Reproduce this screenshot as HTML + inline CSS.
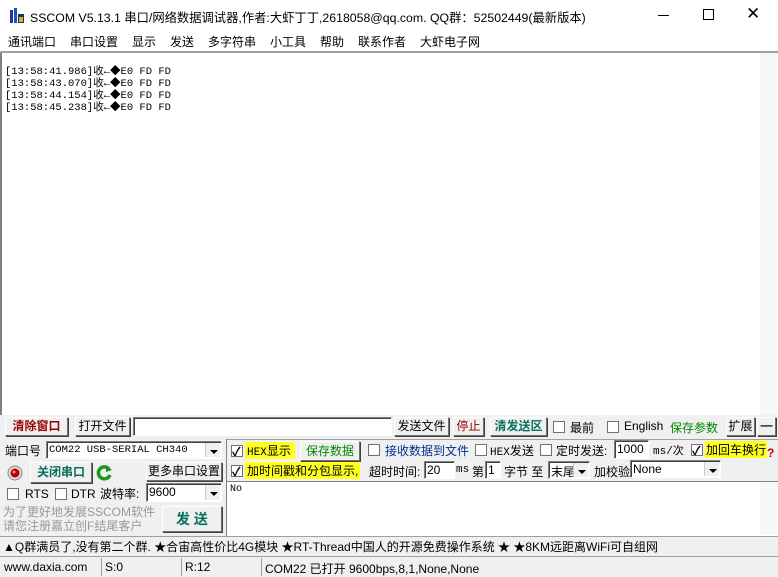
<!DOCTYPE html>
<html><head><meta charset="utf-8"><style>
*{box-sizing:border-box;margin:0;padding:0}
body{width:778px;height:577px;background:#f0f0f0;font-family:"Liberation Sans","Noto Sans CJK SC",sans-serif;font-size:12px;color:#000;position:relative;overflow:hidden}
.a{position:absolute;white-space:nowrap}
.btn{position:absolute;background:#f0f0f0;border:1px solid;border-color:#fff #707070 #707070 #fff;box-shadow:1px 1px 0 #404040;text-align:center;white-space:nowrap}
.inp{position:absolute;background:#fff;border:1px solid;border-color:#808080 #fff #fff #808080;box-shadow:inset 1px 1px 0 #404040;white-space:nowrap;overflow:hidden}
.cb{position:absolute;width:12px;height:12px;background:#fff;border:1px solid #707070}
.cb.on::after{content:"✓";position:absolute;left:0;top:-3px;font-size:12px;font-weight:bold}
.dd{position:absolute;right:1px;top:1px;bottom:1px;width:15px;background:#f0f0f0;border-left:1px solid #ccc}
.dd::after{content:"";position:absolute;left:4px;top:7px;border:4px solid transparent;border-top:4px solid #000;border-bottom:0}
.mono{font-family:"Liberation Mono","Noto Sans CJK SC",monospace}
.y{background:#ffff20}
</style></head><body>
<div class="a" style="left:0;top:0;width:778px;height:31px;background:#fff"></div>
<svg class="a" style="left:9px;top:8px" width="16" height="16"><rect x="1" y="2" width="3" height="13" fill="#1a3aa0"/><rect x="5" y="0" width="3" height="15" fill="#2050c0"/><rect x="9" y="6" width="6" height="9" fill="#203070"/><rect x="10" y="9" width="4" height="5" fill="#e0b020"/></svg>
<div class="a" style="left:30px;top:8px;font-size:12.3px">SSCOM V5.13.1 串口/网络数据调试器,作者:大虾丁丁,2618058@qq.com. QQ群：52502449(最新版本)</div>
<div class="a" style="left:658px;top:15px;width:11px;height:1px;background:#000"></div>
<div class="a" style="left:703px;top:9px;width:11px;height:11px;border:1px solid #000"></div>
<div class="a" style="left:746px;top:4px;font-size:17px;font-weight:300">✕</div>
<div class="a" style="left:0;top:31px;width:778px;height:21px;background:#fff"></div>
<div class="a" style="left:8px;top:33px;font-size:12px;word-spacing:0">通讯端口</div>
<div class="a" style="left:70px;top:33px">串口设置</div>
<div class="a" style="left:132px;top:33px">显示</div>
<div class="a" style="left:170px;top:33px">发送</div>
<div class="a" style="left:208px;top:33px">多字符串</div>
<div class="a" style="left:270px;top:33px">小工具</div>
<div class="a" style="left:320px;top:33px">帮助</div>
<div class="a" style="left:358px;top:33px">联系作者</div>
<div class="a" style="left:420px;top:33px">大虾电子网</div>
<div class="a" style="left:0;top:51px;width:778px;height:2px;background:#a0a0a0"></div>
<div class="a" style="left:0;top:53px;width:778px;height:362px;background:#fff;border-left:2px solid #808080"></div>
<div class="a" style="left:760px;top:53px;width:17px;height:362px;background:#f7f7f7"></div>
<div class="a mono" style="left:5px;top:66px;font-size:10.5px;line-height:12px">[13:58:41.986]收←◆E0 FD FD<br>[13:58:43.070]收←◆E0 FD FD<br>[13:58:44.154]收←◆E0 FD FD<br>[13:58:45.238]收←◆E0 FD FD</div>
<div class="btn" style="left:5px;top:417px;width:63px;height:19px;color:#900;font-weight:bold;line-height:17px">清除窗口</div>
<div class="btn" style="left:75px;top:417px;width:55px;height:19px;line-height:17px">打开文件</div>
<div class="inp" style="left:133px;top:417px;width:259px;height:19px"></div>
<div class="btn" style="left:394px;top:417px;width:55px;height:19px;line-height:17px">发送文件</div>
<div class="btn" style="left:453px;top:417px;width:31px;height:19px;line-height:17px;color:#900">停止</div>
<div class="btn" style="left:490px;top:417px;width:57px;height:19px;line-height:17px;color:#087060;font-weight:bold">清发送区</div>
<div class="cb" style="left:553px;top:421px"></div><div class="a" style="left:570px;top:419px">最前</div>
<div class="cb" style="left:607px;top:421px"></div><div class="a" style="left:624px;top:419px">English</div>
<div class="a" style="left:670px;top:419px;color:#080">保存参数</div>
<div class="btn" style="left:726px;top:417px;width:29px;height:19px;line-height:17px">扩展</div>
<div class="btn" style="left:757px;top:417px;width:19px;height:19px;line-height:15px;font-weight:bold">—</div>
<div class="a" style="left:5px;top:442px">端口号</div>
<div class="inp mono" style="left:46px;top:441px;width:176px;height:18px;font-size:10.5px;padding:2px 2px">COM22 USB-SERIAL CH340<div class="dd"></div></div>
<div class="a" style="left:226px;top:439px;width:552px;height:1px;background:#a0a0a0"></div>
<div class="a" style="left:226px;top:439px;width:1px;height:98px;background:#808080"></div>
<div class="cb on" style="left:231px;top:445px"></div><div class="a y" style="left:245px;top:442px;padding:0 2px;width:50px"><span class="mono" style="font-size:11px">HEX</span>显示</div>
<div class="btn" style="left:300px;top:441px;width:60px;height:20px;line-height:18px;color:#080">保存数据</div>
<div class="cb" style="left:368px;top:444px"></div><div class="a" style="left:385px;top:442px;color:#003090">接收数据到文件</div>
<div class="cb" style="left:475px;top:444px"></div><div class="a" style="left:490px;top:442px"><span class="mono" style="font-size:11px">HEX</span>发送</div>
<div class="cb" style="left:540px;top:444px"></div><div class="a" style="left:556px;top:442px">定时发送:</div>
<div class="inp" style="left:614px;top:440px;width:35px;height:19px;padding:1px 2px">1000</div>
<div class="a mono" style="left:653px;top:442px;font-size:11px">ms/次</div>
<div class="cb on" style="left:691px;top:444px"></div><div class="a y" style="left:705px;top:441px;padding:0 1px">加回车换行</div>
<div class="a" style="left:767px;top:446px;color:#c00;font-weight:bold;font-size:12px">?</div>
<svg class="a" style="left:7px;top:465px" width="16" height="16"><circle cx="8" cy="8" r="7" fill="#ddd" stroke="#888"/><circle cx="8" cy="8" r="4.5" fill="#b00"/><circle cx="7" cy="7" r="1.5" fill="#f88"/></svg>
<div class="btn" style="left:30px;top:462px;width:62px;height:21px;line-height:19px;color:#087060;font-weight:bold">关闭串口</div>
<svg class="a" style="left:96px;top:464px" width="17" height="17"><path d="M13 5 A6 6 0 1 0 14 11" stroke="#1a9a1a" stroke-width="3.5" fill="none"/><path d="M10 1 L16 6 L10 8Z" fill="#1a9a1a"/></svg>
<div class="btn" style="left:146px;top:462px;width:76px;height:19px;line-height:17px">更多串口设置</div>
<div class="cb on" style="left:231px;top:465px"></div><div class="a y" style="left:245px;top:462px;padding:0 2px">加时间戳和分包显示,</div>
<div class="a" style="left:369px;top:463px">超时时间:</div>
<div class="inp" style="left:424px;top:461px;width:31px;height:18px;padding:1px 2px">20</div>
<div class="a mono" style="left:456px;top:464px;font-size:11px">ms</div>
<div class="a" style="left:472px;top:463px">第</div>
<div class="inp" style="left:485px;top:461px;width:16px;height:18px;padding:1px 2px">1</div>
<div class="a" style="left:504px;top:463px">字节 至</div>
<div class="inp" style="left:548px;top:461px;width:42px;height:18px;padding:1px 2px">末尾<div class="dd"></div></div>
<div class="a" style="left:594px;top:463px">加校验</div>
<div class="inp" style="left:630px;top:460px;width:91px;height:18px;padding:1px 2px">None<div class="dd"></div></div>
<div class="cb" style="left:7px;top:488px"></div><div class="a" style="left:25px;top:487px">RTS</div>
<div class="cb" style="left:55px;top:488px"></div><div class="a" style="left:71px;top:487px">DTR</div>
<div class="a" style="left:100px;top:485px">波特率:</div>
<div class="inp" style="left:146px;top:483px;width:76px;height:19px;padding:1px 2px">9600<div class="dd"></div></div>
<div class="a" style="left:227px;top:481px;width:551px;height:55px;background:#fff;border-top:1px solid #808080"></div>
<div class="a" style="left:760px;top:482px;width:17px;height:53px;background:#f7f7f7"></div>
<div class="a mono" style="left:230px;top:484px;font-size:10px">No</div>
<div class="a" style="left:3px;top:505px;color:#999;font-size:12px;line-height:14px">为了更好地发展SSCOM软件<br>请您注册嘉立创F结尾客户</div>
<div class="btn" style="left:162px;top:506px;width:60px;height:26px;line-height:24px;color:#087060;font-weight:bold;font-size:14px">发 送</div>
<div class="a" style="left:0;top:536px;width:778px;height:19px;border-top:1px solid #a0a0a0"></div>
<div class="a" style="left:3px;top:538px">▲Q群满员了,没有第二个群. ★合宙高性价比4G模块 ★RT-Thread中国人的开源免费操作系统 ★ ★8KM远距离WiFi可自组网</div>
<div class="a" style="left:0;top:556px;width:778px;height:1px;background:#a0a0a0"></div>
<div class="a" style="left:4px;top:560px;font-size:12px">www.daxia.com</div>
<div class="a" style="left:101px;top:558px;width:1px;height:18px;background:#a0a0a0"></div>
<div class="a" style="left:105px;top:560px">S:0</div>
<div class="a" style="left:181px;top:558px;width:1px;height:18px;background:#a0a0a0"></div>
<div class="a" style="left:185px;top:560px">R:12</div>
<div class="a" style="left:261px;top:558px;width:1px;height:18px;background:#a0a0a0"></div>
<div class="a" style="left:265px;top:560px">COM22 已打开  9600bps,8,1,None,None</div>
</body></html>
